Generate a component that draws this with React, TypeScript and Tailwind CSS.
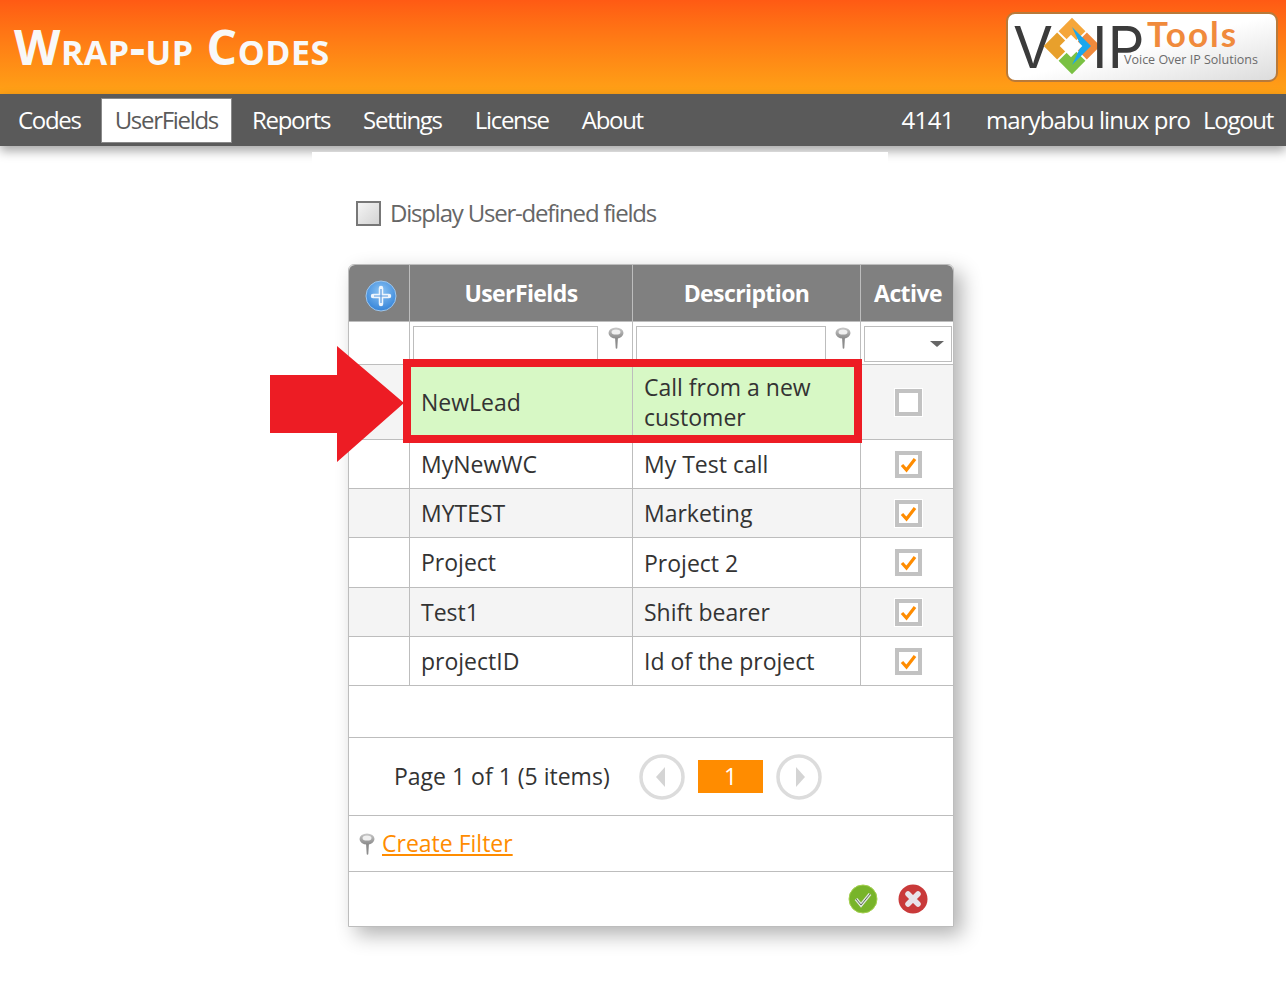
import type { ReactNode } from "react";

type Row = { name: string; description: ReactNode; active: boolean; height: string; green?: boolean };

const rows: Row[] = [
  {
    name: "NewLead",
    description: (
      <>
        Call from a new
        <br />
        customer
      </>
    ),
    active: false,
    height: "h-[75px]",
    green: true,
  },
  { name: "MyNewWC", description: "My Test call", active: true, height: "h-[49px]" },
  { name: "MYTEST", description: "Marketing", active: true, height: "h-[49px]" },
  { name: "Project", description: "Project 2", active: true, height: "h-[50px]" },
  { name: "Test1", description: "Shift bearer", active: true, height: "h-[49px]" },
  { name: "projectID", description: "Id of the project", active: true, height: "h-[49px]" },
];

const navItems = ["Codes", "UserFields", "Reports", "Settings", "License", "About"];

const cols = "grid grid-cols-[60px_223px_228px_95px]";

function Pin() {
  return (
    <svg width="18" height="24" viewBox="0 0 18 24">
      <defs>
        <linearGradient id="pinHead" x1="0" y1="0" x2="0" y2="1">
          <stop offset="0" stopColor="#c9c9c9" />
          <stop offset="1" stopColor="#8a8a8a" />
        </linearGradient>
      </defs>
      <path d="M8 11h3l-.7 11a.8.8 0 0 1-1.6 0z" fill="#8d8d8d" />
      <ellipse cx="9" cy="7" rx="7.5" ry="5.5" fill="url(#pinHead)" />
      <ellipse cx="9" cy="6" rx="4.5" ry="2.6" fill="#f0f0f0" />
    </svg>
  );
}

function CheckBox({ checked }: { checked: boolean }) {
  return (
    <div className="flex size-[27px] items-center justify-center border-[4px] border-[#c2c2c2] bg-white outline outline-1 outline-white">
      {checked && (
        <svg width="19" height="19" viewBox="0 0 19 19">
          <path d="M3 10l4.5 5L16 4" fill="none" stroke="#ff8c00" strokeWidth="3.2" />
        </svg>
      )}
    </div>
  );
}

function PagerArrow({ dir }: { dir: "left" | "right" }) {
  return (
    <svg width="46" height="46" viewBox="0 0 46 46">
      <circle cx="23" cy="23" r="21" fill="#fff" stroke="#dcdcdc" strokeWidth="3.5" />
      <path d={dir === "left" ? "M26 13v20l-9-10z" : "M20 13v20l9-10z"} fill="#d4d4d4" />
    </svg>
  );
}

function Logo() {
  return (
    <div className="h-[70px] w-[272px] overflow-hidden rounded-[9px] border-2 border-[#b87a3a] bg-gradient-to-br from-[#ffffff] via-[#ffffff] to-[#dcdcdc]">
      <svg width="268" height="66" viewBox="0 0 268 66">
        <text x="5" y="54" fontFamily="Inter" fontSize="58" fill="#3b3b3b">V</text>
        <g transform="rotate(45 64 32)">
          <rect x="44" y="12" width="19" height="19" fill="#f5a63a" />
          <rect x="65" y="12" width="19" height="19" fill="#f08a3c" />
          <rect x="44" y="33" width="19" height="19" fill="#e8a02c" />
          <rect x="65" y="33" width="19" height="19" fill="#7ac143" />
        </g>
        <path d="M64 13l19 19-19 19 9-19z" fill="#19a7ee" />
        <rect x="55" y="24" width="16" height="16" transform="rotate(45 63 32)" fill="#fff" />
        <text x="84" y="54" fontFamily="Inter" fontSize="58" fill="#3b3b3b">IP</text>
        <text x="139" y="33" fontFamily="Lato" fontWeight="700" fontSize="35" letterSpacing="2" fill="#f08a3c">Tools</text>
        <text x="116" y="50" fontFamily="Open Sans" fontSize="12.5" fill="#6b6b6b">Voice Over IP Solutions</text>
      </svg>
    </div>
  );
}

export default function App() {
  return (
    <div className="relative min-h-[982px] bg-white font-['Open_Sans',sans-serif] text-[#333]">
      <header className="flex h-[94px] items-center justify-between bg-gradient-to-b from-[#ff5a14] to-[#ffa216] pl-[14px] pr-[8px]">
        <h1 className="text-[48px] font-bold tracking-[0.5px] text-[#f8f8f8] [font-variant:small-caps]">Wrap-up Codes</h1>
        <Logo />
      </header>

      <nav className="relative flex h-[52px] items-center bg-[#5a5a5a] pl-[18px] pr-[13px] text-[24px] tracking-[-1.3px] text-white shadow-[0_5px_10px_rgba(0,0,0,0.35)]">
        <div className="flex items-center gap-[33px]">
          {navItems.map((item) =>
            item === "UserFields" ? (
              <a key={item} className="-mx-[13px] flex h-[45px] items-center border border-[#8a8a8a] bg-white px-[13px] text-[#5a5a5a]">
                {item}
              </a>
            ) : (
              <a key={item}>{item}</a>
            ),
          )}
        </div>
        <div className="ml-auto flex items-center">
          <span className="mr-[32px] tracking-[-0.6px]">4141</span>
          <span className="mr-[13px] tracking-[-0.9px]">marybabu linux pro</span>
          <a>Logout</a>
        </div>
      </nav>

      <main className="relative ml-[312px] mt-[6px] w-[576px] bg-white pb-[56px]">
        <label className="flex items-center gap-[9px] pl-[44px] pt-[44px] text-[24px] leading-[34px] tracking-[-1.2px] text-[#666]">
          <span className="size-[25px] border-2 border-[#777] bg-gradient-to-br from-[#f4f4f4] to-[#d4d4d4]" />
          Display User-defined fields
        </label>

        <div className="ml-[36px] mt-[34px] w-[606px] rounded-t-[6px] border border-[#bdbdbd] bg-white text-[23px] shadow-[8px_8px_20px_rgba(0,0,0,0.3)]">
          <div className={`${cols} h-[56px] rounded-t-[6px] bg-[#808080] text-center font-bold tracking-[-0.6px] text-white`}>
            <div className="flex items-center justify-center pl-[3px] pt-[6px]">
              <svg width="32" height="32" viewBox="0 0 32 32">
                <defs>
                  <radialGradient id="plusBg" cx="0.5" cy="0.35" r="0.7">
                    <stop offset="0" stopColor="#8cc4f4" />
                    <stop offset="1" stopColor="#2f7fd6" />
                  </radialGradient>
                </defs>
                <circle cx="16" cy="16" r="15" fill="url(#plusBg)" stroke="#9ec6ec" />
                <path d="M16 8v16M8 16h16" stroke="#eef5fc" strokeWidth="4.5" strokeLinecap="round" />
                <path d="M16 9v14M9 16h14" stroke="#5a9be0" strokeWidth="1.2" />
              </svg>
            </div>
            <div className="flex items-center justify-center border-l border-[#bdbdbd]">UserFields</div>
            <div className="flex items-center justify-center border-l border-[#bdbdbd]">Description</div>
            <div className="flex items-center justify-center border-l border-[#bdbdbd]">Active</div>
          </div>

          <div className={`${cols} h-[44px] border-y border-[#bdbdbd]`}>
            <div />
            <div className="flex gap-[9px] border-l border-[#bdbdbd] pl-[3px] pt-[4px]">
              <div className="h-[36px] w-[185px] border border-[#bdbdbd]" />
              <Pin />
            </div>
            <div className="flex gap-[8px] border-l border-[#bdbdbd] pl-[3px] pt-[4px]">
              <div className="h-[36px] w-[190px] border border-[#bdbdbd]" />
              <Pin />
            </div>
            <div className="border-l border-[#bdbdbd] pl-[3px] pt-[4px]">
              <div className="flex h-[36px] w-[88px] items-center justify-end border border-[#bdbdbd] pr-[7px]">
                <span className="size-0 border-x-[7px] border-t-[6px] border-x-transparent border-t-[#666]" />
              </div>
            </div>
          </div>

          {rows.map((row, i) => (
            <div key={row.name} className={`${cols} ${row.height} border-b border-[#bdbdbd] ${i % 2 === 0 ? "bg-[#f4f4f4]" : "bg-white"}`}>
              <div />
              <div className={`flex items-center border-l border-[#bdbdbd] pl-[11px] ${row.green ? "bg-[#d7f8c5]" : ""}`}>{row.name}</div>
              <div className={`flex items-center border-l border-[#bdbdbd] pl-[11px] leading-[30px] ${row.green ? "bg-[#d7f8c5]" : ""}`}>
                <span>{row.description}</span>
              </div>
              <div className="flex items-center justify-center border-l border-[#bdbdbd]">
                <CheckBox checked={row.active} />
              </div>
            </div>
          ))}

          <div className="h-[52px] border-b border-[#bdbdbd]" />

          <div className="flex h-[78px] items-center border-b border-[#bdbdbd] pl-[45px]">
            <span className="w-[245px]">Page 1 of 1 (5 items)</span>
            <PagerArrow dir="left" />
            <span className="mx-[13px] flex h-[33px] w-[65px] items-center justify-center bg-[#ff8c00] text-white">1</span>
            <PagerArrow dir="right" />
          </div>

          <div className="flex h-[56px] items-center gap-[6px] border-b border-[#bdbdbd] pl-[9px]">
            <Pin />
            <a className="text-[#ff8c00] underline">Create Filter</a>
          </div>

          <div className="flex h-[54px] items-center justify-end gap-[20px] pr-[25px]">
            <svg width="30" height="30" viewBox="0 0 30 30">
              <circle cx="15" cy="15" r="14" fill="#78b42a" stroke="#a4d04e" />
              <path d="M8 15l5 6 9-11" fill="none" stroke="#dfe6dc" strokeWidth="3.5" />
              <path d="M8 15l5 6 9-11" fill="none" stroke="#5c6e58" strokeWidth="1" />
            </svg>
            <svg width="30" height="30" viewBox="0 0 30 30">
              <circle cx="15" cy="15" r="14.5" fill="#c93a3a" />
              <path d="M10 10l10 10M20 10L10 20" stroke="#e8e4ea" strokeWidth="5.5" strokeLinecap="round" />
            </svg>
          </div>
        </div>
      </main>

      <svg className="absolute left-[270px] top-[346px]" width="134" height="116" viewBox="0 0 134 116">
        <path d="M0 29h67V0l67 57-67 59V87H0z" fill="#ed1c24" />
      </svg>
      <div className="absolute left-[403px] top-[359px] h-[84px] w-[459px] border-[8px] border-[#ed1c24]" />
    </div>
  );
}
